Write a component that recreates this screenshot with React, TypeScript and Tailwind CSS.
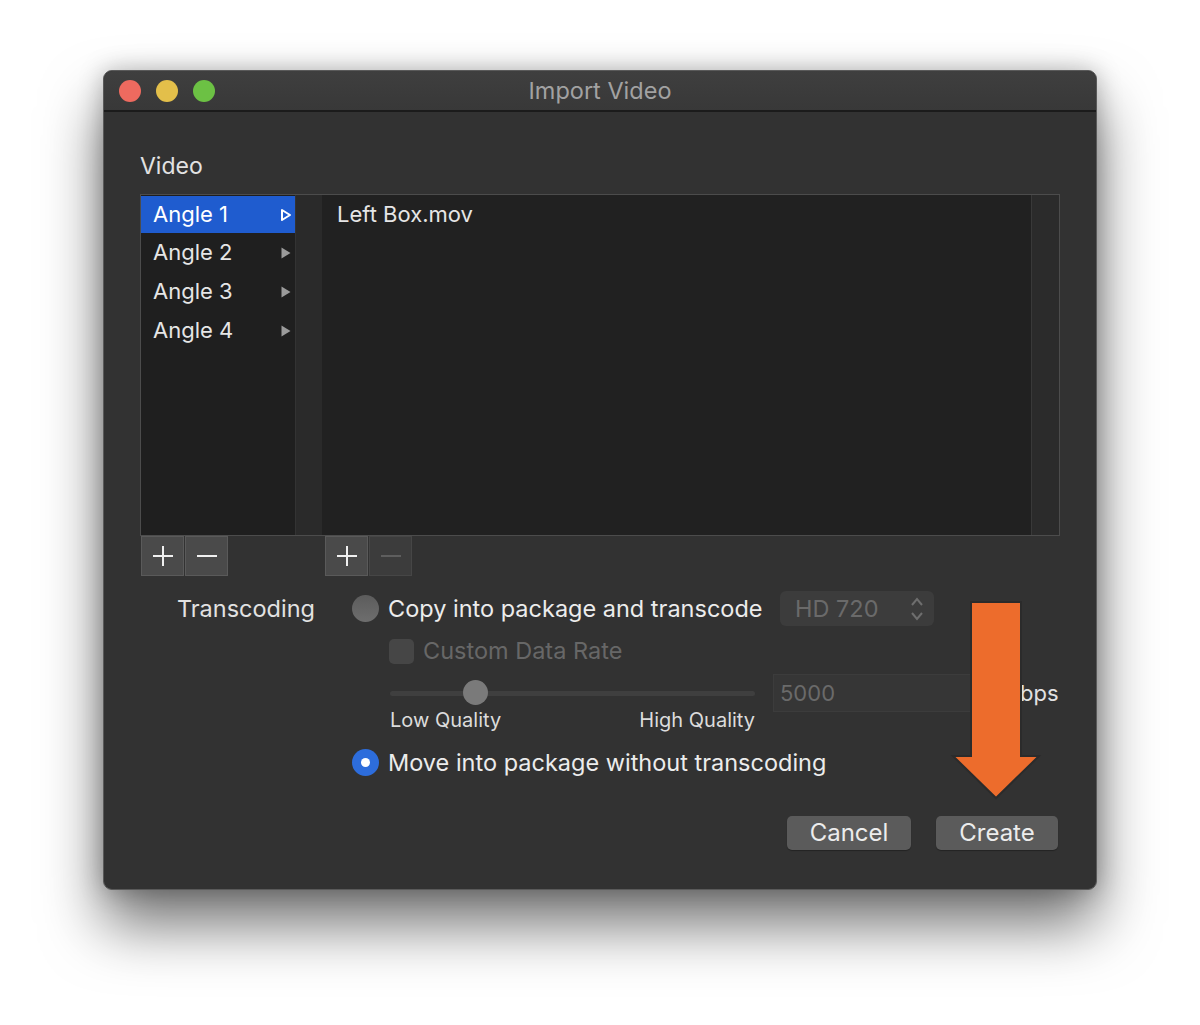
import React from "react";

const font = { fontFamily: "Inter, 'Noto Sans', sans-serif" };

function Triangle({ selected }: { selected?: boolean }) {
  return (
    <svg width="12" height="14" viewBox="0 0 12 14">
      {selected ? (
        <path d="M2 2 L10 7 L2 12 Z" fill="none" stroke="#ffffff" strokeWidth="2" strokeLinejoin="round" />
      ) : (
        <path d="M1.5 1.5 L10.5 7 L1.5 12.5 Z" fill="#9b9b9b" />
      )}
    </svg>
  );
}

function PlusIcon({ color }: { color: string }) {
  return (
    <svg width="22" height="22" viewBox="0 0 22 22">
      <path d="M11 1 V21 M1 11 H21" stroke={color} strokeWidth="2" />
    </svg>
  );
}

function MinusIcon({ color }: { color: string }) {
  return (
    <svg width="22" height="22" viewBox="0 0 22 22">
      <path d="M1 11 H21" stroke={color} strokeWidth="2" />
    </svg>
  );
}

function SmallButton({ children, disabled }: { children: React.ReactNode; disabled?: boolean }) {
  return (
    <div
      className={`w-[43px] h-[40px] flex items-center justify-center border ${
        disabled ? "bg-[#3c3c3c] border-[#464646]" : "bg-[#4a4a4a] border-[#5a5a5a]"
      }`}
    >
      {children}
    </div>
  );
}

const angles = ["Angle 1", "Angle 2", "Angle 3", "Angle 4"];

export default function App() {
  return (
    <div className="min-h-[1025px] w-[1200px] bg-white pt-[70px] pl-[103px]" style={font}>
      {/* window */}
      <div className="relative w-[994px] rounded-[9px] border border-[#5a5a5a] bg-[#323232] shadow-[0_35px_60px_rgba(0,0,0,0.55),0_0_25px_rgba(0,0,0,0.25)]">
        {/* title bar */}
        <div className="relative h-[41px] flex items-center rounded-t-[9px] bg-gradient-to-b from-[#3f3f3f] to-[#383838] border-b-2 border-[#1b1b1b]">
          <div className="flex items-center gap-[15px] pl-[15px]">
            <span className="w-[22px] h-[22px] rounded-full bg-[#ee6a5f]" />
            <span className="w-[22px] h-[22px] rounded-full bg-[#e3bf4a]" />
            <span className="w-[22px] h-[22px] rounded-full bg-[#6cc144]" />
          </div>
          <div className="absolute inset-0 flex items-center justify-center text-[23.5px] text-[#a2a2a2] pointer-events-none">
            Import Video
          </div>
        </div>

        {/* body */}
        <div className="px-[36px] pt-[41px] pb-[39px]">
          <div className="text-[23px] leading-[26px] text-[#e2e2e2]">Video</div>

          {/* table */}
          <div className="mt-[15px] flex h-[342px] border border-[#4c4c4c]">
            <div className="w-[154px] bg-[#1f1f1f] pt-[1px]">
              {angles.map((a, i) => (
                <div
                  key={a}
                  className={`flex items-center justify-between pl-[12px] pr-[3px] text-[22px] ${
                    i === 0 ? "h-[37px] bg-[#1f5ccf] text-white" : "h-[39px] text-[#e6e6e6]"
                  }`}
                >
                  <span>{a}</span>
                  <Triangle selected={i === 0} />
                </div>
              ))}
            </div>
            <div className="w-[27px] bg-[#2a2a2a] border-l border-[#333333]" />
            <div className="flex-1 bg-[#212121] pt-[1px]">
              <div className="h-[37px] flex items-center pl-[15px] text-[22px] text-[#e6e6e6]">Left Box.mov</div>
            </div>
            <div className="w-[28px] bg-[#2b2b2b] border-l border-[#393939]" />
          </div>

          {/* add / remove buttons */}
          <div className="flex pl-[1px]">
            <div className="flex gap-[1px]">
              <SmallButton>
                <PlusIcon color="#f0f0f0" />
              </SmallButton>
              <SmallButton>
                <MinusIcon color="#f0f0f0" />
              </SmallButton>
            </div>
            <div className="flex gap-[1px] ml-[97px]">
              <SmallButton>
                <PlusIcon color="#f0f0f0" />
              </SmallButton>
              <SmallButton disabled>
                <MinusIcon color="#5e5e5e" />
              </SmallButton>
            </div>
          </div>

          {/* transcoding */}
          <div className="mt-[15px] flex text-[23.5px]">
            <div className="w-[175px] h-[35px] flex items-center justify-end text-[#e2e2e2]">Transcoding</div>
            <div className="ml-[37px] flex-1">
              {/* option 1 */}
              <div className="h-[35px] flex items-center">
                <span className="w-[27px] h-[27px] rounded-full bg-gradient-to-b from-[#5c5c5c] to-[#6e6e6e]" />
                <span className="ml-[9px] w-[392px] text-[#ececec] whitespace-nowrap">Copy into package and transcode</span>
                <div className="w-[154px] h-[35px] rounded-[6px] bg-[#3c3c3c] flex items-center justify-between pl-[15px] pr-[10px]">
                  <span className="text-[#6a6a6a]">HD 720</span>
                  <svg width="14" height="26" viewBox="0 0 14 26">
                    <path d="M2 9 L7 3 L12 9 M2 17 L7 23 L12 17" fill="none" stroke="#6e6e6e" strokeWidth="2" />
                  </svg>
                </div>
              </div>

              {/* custom data rate */}
              <div className="mt-[12px] h-[26px] flex items-center pl-[37px]">
                <span className="w-[25px] h-[25px] rounded-[5px] bg-[#464646]" />
                <span className="ml-[9px] text-[#676767]">Custom Data Rate</span>
              </div>

              {/* slider + field */}
              <div className="mt-[10px] flex items-start pl-[38px]">
                <div className="w-[365px]">
                  <div className="relative h-[38px] flex items-center">
                    <div className="w-full h-[5px] rounded-full bg-[#3f3f3f]" />
                    <span className="absolute left-[73px] top-[6px] w-[25px] h-[25px] rounded-full bg-[#7a7a7a]" />
                  </div>
                  <div className="-mt-[3px] flex justify-between text-[20px] leading-[22px] text-[#dcdcdc]">
                    <span>Low Quality</span>
                    <span>High Quality</span>
                  </div>
                </div>
                <div className="ml-[18px] w-[225px] h-[38px] bg-[#363636] border border-[#3c3c3c] flex items-center pl-[6px] text-[22px] text-[#6a6a6a]">
                  5000
                </div>
                <div className="ml-[10px] h-[38px] flex items-center text-[22px] text-[#e2e2e2]">kbps</div>
              </div>

              {/* option 2 */}
              <div className="mt-[14px] h-[35px] flex items-center">
                <span className="w-[27px] h-[27px] rounded-full bg-[#2d6ddc] flex items-center justify-center">
                  <span className="w-[9px] h-[9px] rounded-full bg-white" />
                </span>
                <span className="ml-[9px] text-[#ececec] whitespace-nowrap">Move into package without transcoding</span>
              </div>
            </div>
          </div>

          {/* buttons */}
          <div className="mt-[36px] flex justify-end gap-[25px] pr-[2px] text-[24px]">
            <div className="w-[124px] h-[34px] rounded-[5px] bg-[#5b5b5b] flex items-center justify-center text-[#ececec] shadow-[0_1px_1px_rgba(0,0,0,0.3)]">
              Cancel
            </div>
            <div className="w-[122px] h-[34px] rounded-[5px] bg-[#5b5b5b] flex items-center justify-center text-[#ececec] shadow-[0_1px_1px_rgba(0,0,0,0.3)]">
              Create
            </div>
          </div>
        </div>

        {/* orange annotation arrow */}
        <svg className="absolute left-[846px] top-[528px]" width="95" height="204" viewBox="0 0 95 204">
          <polygon
            points="21,3 71,3 71,157 89,157 46,199 3,157 21,157"
            fill="#ed6c2c"
            stroke="#2b2b2b"
            strokeWidth="2"
            strokeLinejoin="miter"
          />
        </svg>
      </div>
    </div>
  );
}
